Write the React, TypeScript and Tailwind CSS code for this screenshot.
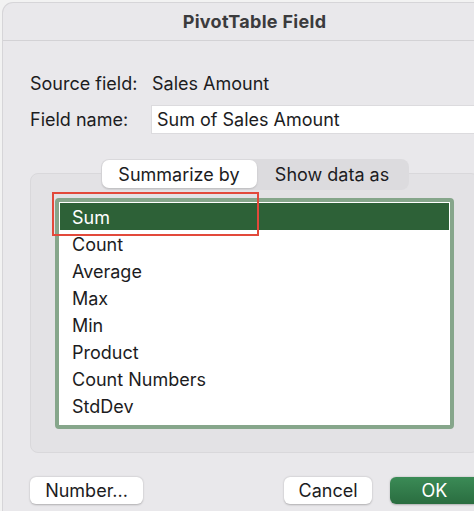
const functions = ['Sum', 'Count', 'Average', 'Max', 'Min', 'Product', 'Count Numbers', 'StdDev']

export default function App() {
  return (
    <div
      className="w-[474px] h-[511px] overflow-hidden bg-[#f2f2f2] pl-[3px] pt-[3px] text-[#1c1c1e]"
      style={{ fontFamily: 'Inter, "Liberation Sans", sans-serif' }}
    >
      <div className="w-[503px] h-[520px] rounded-tl-[10px] bg-[#e9e8eb] shadow-[0_0_0_1px_#d6d5d8]">
        {/* title bar */}
        <div className="h-[38px] flex items-center justify-center border-b border-[#d3d2d5]">
          <span className="text-[18px] font-bold text-[#3b3b3d] tracking-[0.3px]">PivotTable Field</span>
        </div>

        <div className="px-[27px]">
          <div className="mt-[30px] flex items-center h-[24px] text-[18px]">
            <span className="w-[122px]">Source field:</span>
            <span>Sales Amount</span>
          </div>
          <div className="mt-[11px] flex items-center h-[27px] text-[18px]">
            <span className="w-[122px]">Field name:</span>
            <div className="flex-1 h-[27px] bg-white flex items-center px-[5px] shadow-[0_0_0_1px_#dcdbde]">
              Sum of Sales Amount
            </div>
          </div>

          {/* tabs */}
          <div className="relative z-10 mt-[26px] flex justify-center">
            <div className="flex h-[31px] w-[308px] rounded-[8px] bg-[#dcdbde] p-[1px] text-[18px]">
              <div className="w-[155px] h-[28px] rounded-[7px] bg-white shadow-[0_1px_2px_rgba(0,0,0,0.15)] flex items-center justify-center">
                Summarize by
              </div>
              <div className="flex-1 flex items-center justify-center">Show data as</div>
            </div>
          </div>

          {/* group box */}
          <div className="-mt-[17px] h-[280px] rounded-[8px] bg-[#e3e2e5] border border-[#d9d8db] pl-[24px] pt-[24px]">
            <div className="relative w-[399px] h-[231px] rounded-[4px] border-[4px] border-[#86a68b] bg-white pt-[1px] px-[1px]">
              {functions.map((f, i) => (
                <div
                  key={f}
                  className={
                    i === 0
                      ? 'h-[27px] flex items-center pl-[12px] pt-[1px] text-[18px] bg-[#2d6137] text-white'
                      : 'h-[27px] flex items-center pl-[12px] pt-[1px] text-[18px]'
                  }
                >
                  {f}
                </div>
              ))}
              <div className="absolute -left-[7px] -top-[10px] w-[207px] h-[44px] border-2 border-[#e2493b]" />
            </div>
          </div>

          {/* buttons */}
          <div className="mt-[24px] flex items-center text-[18px]">
            <button className="w-[113px] h-[27px] rounded-[6px] bg-white shadow-[0_0.5px_2px_rgba(0,0,0,0.25)]">
              Number...
            </button>
            <button className="ml-auto w-[88px] h-[27px] rounded-[6px] bg-white shadow-[0_0.5px_2px_rgba(0,0,0,0.25)]">
              Cancel
            </button>
            <button className="ml-[18px] w-[89px] h-[27px] rounded-[6px] bg-gradient-to-b from-[#3b8b56] to-[#2a6d40] text-white shadow-[0_0.5px_2px_rgba(0,0,0,0.25)]">
              OK
            </button>
          </div>
        </div>
      </div>
    </div>
  )
}
